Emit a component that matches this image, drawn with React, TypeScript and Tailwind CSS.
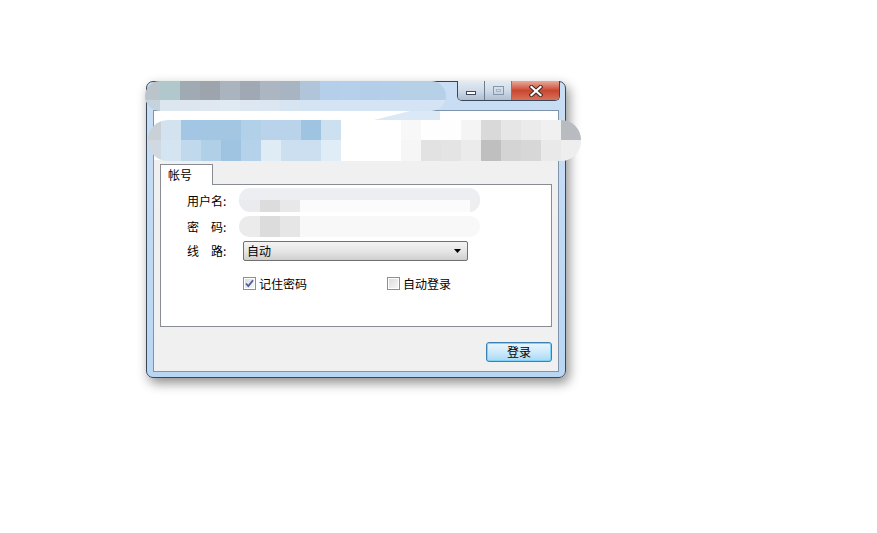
import { useId } from 'react';

type Cell = [number, string];
interface PixelRow {
  h: number;
  cells: Cell[];
}

// pixelated (mosaic) blobs that hide private content in the screenshot
function Mosaic({ w, h, r, rows }: { w: number; h: number; r: number; rows: PixelRow[] }) {
  const id = useId().replace(/:/g, '');
  const rects: React.ReactNode[] = [];
  let y = 0;
  rows.forEach((row, i) => {
    let x = 0;
    row.cells.forEach(([cw, c], j) => {
      rects.push(<rect key={`${i}-${j}`} x={x} y={y} width={cw} height={row.h} fill={c} />);
      x += cw;
    });
    y += row.h;
  });
  return (
    <svg width={w} height={h} viewBox={`0 0 ${w} ${h}`} className="block">
      <defs>
        <clipPath id={`c${id}`}>
          <rect x={0} y={0} width={w} height={h} rx={r} ry={r} />
        </clipPath>
      </defs>
      <g clipPath={`url(#c${id})`}>{rects}</g>
    </svg>
  );
}

const titleRows: PixelRow[] = [
  {
    h: 19,
    cells: [
      [15, '#b9c5cb'], [20, '#b0c8cb'], [20, '#9faab2'], [20, '#9da4ab'], [20, '#aab4be'],
      [20, '#a0a9b3'], [20, '#acb6c3'], [20, '#a9b4c3'], [20, '#b0c5da'], [20, '#b3cfea'],
      [20, '#b5d0ea'], [20, '#b2cee9'], [20, '#b4cfe9'], [46, '#b6d0e8'],
    ],
  },
  {
    h: 11,
    cells: [
      [15, '#c5d3dd'], [20, '#dbe6ef'], [20, '#dde6ee'], [20, '#dfe8f1'], [20, '#e0eaf3'],
      [20, '#dde7f1'], [20, '#dbe6f1'], [20, '#d7e4f1'], [20, '#d5e4f3'], [126, '#d4e4f4'],
    ],
  },
];

const bannerRows: PixelRow[] = [
  {
    h: 20,
    cells: [
      [13, '#c9d0d6'], [20, '#d2e3ef'], [20, '#a2c6e3'], [20, '#a3c6e2'], [20, '#a3c6e2'],
      [20, '#b2d0e8'], [20, '#b9d4ea'], [20, '#b8d3ea'], [20, '#9fc4e2'], [20, '#cde0f0'],
      [60, '#ffffff'], [20, '#f8f8f8'], [40, '#fefefe'], [20, '#f4f4f4'], [20, '#d9d9d9'],
      [20, '#e6e6e6'], [20, '#ebebeb'], [20, '#f0f0f0'], [21, '#b8bcc0'],
    ],
  },
  {
    h: 21,
    cells: [
      [13, '#d0d9e2'], [20, '#d4e5f1'], [20, '#c1d9ed'], [20, '#b0d0e8'], [20, '#9ec4e1'],
      [20, '#b5d2ea'], [20, '#dfebf5'], [20, '#cbdff0'], [20, '#cbdff0'], [20, '#e0ecf6'],
      [60, '#ffffff'], [20, '#f6f6f6'], [20, '#e2e2e2'], [20, '#e4e4e4'], [20, '#ebebeb'],
      [20, '#bfbfbf'], [20, '#d4d4d4'], [20, '#d7d7d7'], [20, '#e9e9e9'], [21, '#eeeeee'],
    ],
  },
];

const userRows: PixelRow[] = [
  { h: 12, cells: [[241, '#eceef1']] },
  {
    h: 12,
    cells: [[21, '#e9ebee'], [20, '#dcdcdc'], [20, '#e8e8e8'], [170, '#fbfbfb'], [10, '#eeeeee']],
  },
];

const passRows: PixelRow[] = [
  { h: 21, cells: [[21, '#ebebeb'], [20, '#dcdcdc'], [20, '#e6e6e6'], [180, '#f8f8f8']] },
];

function CheckBox({ checked }: { checked?: boolean }) {
  return (
    <div className="w-[13px] h-[13px] border border-[#8e8f8f] bg-white p-px">
      <div className="w-full h-full bg-gradient-to-br from-[#dcdcdc] to-[#f6f6f6] flex items-center justify-center">
        {checked && (
          <svg width="9" height="9" viewBox="0 0 9 9">
            <path d="M1 4.5 L3.3 7 L8 1.2" fill="none" stroke="#4a5f9c" strokeWidth="1.8" />
          </svg>
        )}
      </div>
    </div>
  );
}

function CaptionButtons() {
  return (
    <div className="flex -mt-px h-[20px] border border-t-0 border-[#3a4757] rounded-b-[5px] overflow-hidden">
      <div className="w-[27px] h-full border-r border-[#6d7c8e] bg-gradient-to-b from-[#e3ebf4] via-[#cfdbe8] to-[#aebfd2] flex items-end justify-center pb-[5px]">
        <div className="w-[10px] h-[4px] bg-white border border-[#3d4a5a]" />
      </div>
      <div className="w-[27px] h-full border-r border-[#6d7c8e] bg-gradient-to-b from-[#e3ebf4] via-[#cfdbe8] to-[#aebfd2] flex items-center justify-center">
        <div className="w-[11px] h-[9px] border border-[#8797aa] flex items-center justify-center">
          <div className="w-[5px] h-[3px] border border-[#a7b5c5]" />
        </div>
      </div>
      <div className="w-[47px] h-full bg-gradient-to-b from-[#e9a99b] via-[#c9462f] to-[#d8705a] flex items-center justify-center">
        <svg width="14" height="12" viewBox="0 0 14 12">
          <path d="M2.5 2 L11.5 10 M11.5 2 L2.5 10" stroke="#3d2a2a" strokeWidth="4.2" strokeLinecap="square" />
          <path d="M2.5 2 L11.5 10 M11.5 2 L2.5 10" stroke="#ffffff" strokeWidth="2.2" strokeLinecap="square" />
        </svg>
      </div>
    </div>
  );
}

export default function App() {
  const font = "font-['Noto_Sans_CJK_SC','Noto_Sans',sans-serif]";
  return (
    <div className={`w-[877px] h-[533px] bg-white pl-[146px] pt-[81px] ${font} text-[12px] leading-none text-black`}>
      <div className="relative w-[420px] h-[297px] rounded-[7px] border border-[#3a4757] bg-gradient-to-b from-[#c9def4] to-[#b9d6f3] shadow-[3px_5px_12px_rgba(0,0,0,0.45)] flex flex-col">
        {/* title bar */}
        <div className="h-[28px] flex justify-end items-start pr-[5px]">
          <CaptionButtons />
        </div>

        {/* client area */}
        <div className="mx-[6px] mb-[5px] flex-1 border border-[#7f94aa] flex flex-col">
          <div className="h-[49px] bg-white" />
          <div className="flex-1 bg-[#f0f0f0] px-[6px] pt-[4px] flex flex-col">
            <div className="relative z-10 w-[53px] h-[21px] -mb-px border border-b-0 border-[#898c95] bg-white pl-[7px] pt-[4px]">
              帐号
            </div>
            <div className="h-[143px] border border-[#898c95] bg-white pl-[26px] pt-[3px] flex flex-col">
              <div className="h-[24px] flex items-center">
                <div className="w-[52px] pt-px">用户名:</div>
                <Mosaic w={241} h={24} r={11} rows={userRows} />
              </div>
              <div className="mt-[4px] h-[21px] flex items-center">
                <div className="w-[52px]">密　码:</div>
                <Mosaic w={241} h={21} r={10} rows={passRows} />
              </div>
              <div className="mt-[4px] h-[20px] flex items-center">
                <div className="w-[56px]">线　路:</div>
                <div className="w-[225px] h-[20px] rounded-[2px] border border-[#707070] bg-gradient-to-b from-[#f3f3f3] via-[#e6e6e6] to-[#cfcfcf] flex items-center justify-between pl-[3px] pr-[6px]">
                  <span>自动</span>
                  <svg width="7" height="4" viewBox="0 0 7 4">
                    <path d="M0 0 H7 L3.5 4 Z" fill="#000" />
                  </svg>
                </div>
              </div>
              <div className="mt-[16px] pl-[56px] flex items-center">
                <div className="w-[144px] flex items-center gap-[3px]">
                  <CheckBox checked />
                  <span>记住密码</span>
                </div>
                <div className="flex items-center gap-[3px]">
                  <CheckBox />
                  <span>自动登录</span>
                </div>
              </div>
            </div>
            <div className="mt-[15px] flex justify-end">
              <button className="w-[66px] h-[20px] rounded-[3px] border border-[#3c7fb1] bg-gradient-to-b from-[#eaf6fd] via-[#cdeafb] to-[#a7d9f5] shadow-[inset_0_0_0_1px_#7fd1f5] text-[12px] leading-none">
                登录
              </button>
            </div>
          </div>
        </div>

        {/* privacy mosaics over the title and banner */}
        <svg className="absolute left-[223px] top-[29px]" width="70" height="10" viewBox="0 0 70 10">
          <path d="M40 0 H70 V10 H0 Z" fill="#dbe8f5" />
        </svg>
        <div className="absolute left-[-2px] top-[-1px]">
          <Mosaic w={301} h={30} r={15} rows={titleRows} />
        </div>
        <div className="absolute left-[1px] top-[38px]">
          <Mosaic w={433} h={41} r={20} rows={bannerRows} />
        </div>
      </div>
    </div>
  );
}
